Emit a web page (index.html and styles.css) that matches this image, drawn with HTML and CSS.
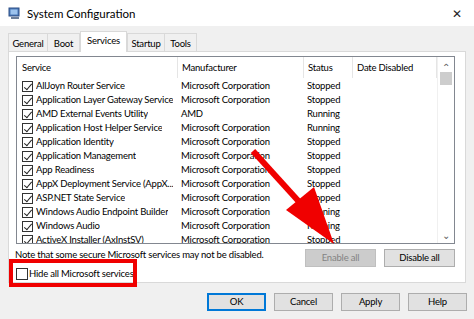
FILE: index.html
```html
<!DOCTYPE html>
<html>
<head>
    <meta charset="UTF-8">
    <title>System Configuration</title>
    <link rel="stylesheet" href="styles.css">
</head>
<body>
    <!-- Title bar -->
    <div class="titlebar">
        <svg class="app-icon" width="13" height="13" viewBox="0 0 13 13">
            <rect x="1" y="1" width="10" height="8" fill="#4a78b8" stroke="#2d4f86"/>
            <rect x="2.5" y="2.5" width="7" height="5" fill="#9cc3ee"/>
            <rect x="3" y="10" width="8" height="2" fill="#6d7f99"/>
        </svg>
        <span class="title">System Configuration</span>
        <span class="close">✕</span>
    </div>

    <!-- Tabs -->
    <div class="tabs">
        <div class="tab general">General</div>
        <div class="tab boot">Boot</div>
        <div class="tab active">Services</div>
        <div class="tab startup">Startup</div>
        <div class="tab tools">Tools</div>
    </div>

    <div class="panel">
        <div class="list">
            <div class="list-body">
                <div class="row header">
                    <div class="cell first">Service</div>
                    <div class="cell">Manufacturer</div>
                    <div class="cell">Status</div>
                    <div class="cell">Date Disabled</div>
                </div>
                <div id="rows"></div>
            </div>
            <div class="scrollbar">
                <div class="arrow up">&#8963;</div>
                <div class="thumb"></div>
                <div class="track"></div>
                <div class="arrow down">&#8964;</div>
            </div>
        </div>

        <div class="footer">
            <div class="notes">
                <div class="note">Note that some secure Microsoft services may not be disabled.</div>
                <label class="hide-ms"><span class="box"></span>Hide all Microsoft services</label>
            </div>
            <div class="btn disabled">Enable all</div>
            <div class="btn">Disable all</div>
        </div>
    </div>

    <div class="dialog-buttons">
        <div class="btn default">OK</div>
        <div class="btn">Cancel</div>
        <div class="btn">Apply</div>
        <div class="btn">Help</div>
    </div>

    <!-- annotations -->
    <div class="red-box"></div>
    <svg class="red-arrow" width="474" height="319" viewBox="0 0 474 319">
        <line x1="253" y1="151" x2="302" y2="205" stroke="#f00000" stroke-width="6"/>
        <polygon points="286,210 314,187 334,244" fill="#f00000"/>
    </svg>

    <script>
        const services = [
            ["AllJoyn Router Service", "Microsoft Corporation", "Stopped"],
            ["Application Layer Gateway Service", "Microsoft Corporation", "Stopped"],
            ["AMD External Events Utility", "AMD", "Running"],
            ["Application Host Helper Service", "Microsoft Corporation", "Running"],
            ["Application Identity", "Microsoft Corporation", "Stopped"],
            ["Application Management", "Microsoft Corporation", "Stopped"],
            ["App Readiness", "Microsoft Corporation", "Stopped"],
            ["AppX Deployment Service (AppX...", "Microsoft Corporation", "Stopped"],
            ["ASP.NET State Service", "Microsoft Corporation", "Stopped"],
            ["Windows Audio Endpoint Builder", "Microsoft Corporation", "Running"],
            ["Windows Audio", "Microsoft Corporation", "Running"],
            ["ActiveX Installer (AxInstSV)", "Microsoft Corporation", "Stopped"]
        ];

        let html = '';
        services.forEach(s => {
            html += `<div class="row">
                <div class="cell first"><span class="box checked"></span><span class="txt">${s[0]}</span></div>
                <div class="cell">${s[1]}</div>
                <div class="cell">${s[2]}</div>
                <div class="cell"></div>
            </div>`;
        });
        document.getElementById('rows').innerHTML = html;
    </script>
</body>
</html>
```

FILE: styles.css
```css
body {
    margin: 0;
    width: 474px;
    height: 319px;
    overflow: hidden;
    background-color: #f0f0f0;
    font-family: Lato, "Liberation Sans", sans-serif;
    font-size: 9.5px;
    letter-spacing: -0.2px;
    color: #000;
    position: relative;
}
.titlebar {
    height: 26px;
    background-color: #fff;
    display: flex;
    align-items: center;
    padding-left: 8px;
    padding-right: 12px;
}
.app-icon {
    margin-right: 6px;
}
.title {
    font-size: 11.5px;
    letter-spacing: 0;
    flex: 1;
}
.close {
    font-size: 12px;
    color: #222;
}
.tabs {
    display: flex;
    padding-left: 8px;
    margin-top: 6px;
    height: 19px;
    align-items: flex-end;
}
.tab {
    height: 18px;
    line-height: 19px;
    text-align: center;
    border: 1px solid #d9d9d9;
    border-bottom: none;
    background-color: #f0f0f0;
    margin-right: -1px;
    box-sizing: border-box;
}
.general { width: 40px; }
.boot { width: 33px; }
.startup { width: 38px; }
.tools { width: 33px; }
.tab.active {
    width: 47px;
    height: 21px;
    line-height: 17px;
    background-color: #fff;
    margin: 0 0 -1px 1px;
    position: relative;
    z-index: 1;
}
.panel {
    margin: 0 8px;
    height: 226px;
    background-color: #fff;
    border: 1px solid #d9d9d9;
    padding: 4px 10px 0 7px;
}
.list {
    height: 186px;
    border: 1px solid #828790;
    display: flex;
    overflow: hidden;
}
.list-body {
    flex: 1;
    overflow: hidden;
}
.row {
    display: grid;
    grid-template-columns: 161px 126px 49px 84px;
    height: 14px;
    line-height: 14px;
    white-space: nowrap;
}
.row.header {
    height: 21px;
    line-height: 21px;
    margin-bottom: 1px;
}
.row.header .cell {
    border-right: 1px solid #e5e5e5;
    padding-left: 4px;
}
.cell {
    padding-left: 3px;
    overflow: hidden;
}
.cell.first {
    display: flex;
    align-items: center;
    padding-left: 5px;
}
.txt {
    overflow: hidden;
}
.row.header .cell.first {
    padding-left: 5px;
}
.box {
    display: inline-block;
    width: 11px;
    height: 11px;
    border: 1px solid #333;
    background-color: #fff;
    margin-right: 3px;
    position: relative;
    box-sizing: border-box;
    flex: none;
}
.box.checked::after {
    content: "";
    position: absolute;
    left: 3px;
    top: 0px;
    width: 3px;
    height: 7px;
    border: solid #222;
    border-width: 0 1px 1px 0;
    transform: rotate(40deg);
}
.scrollbar {
    width: 16px;
    border-left: 1px solid #f0f0f0;
    background-color: #fff;
    display: flex;
    flex-direction: column;
    align-items: center;
}
.arrow {
    height: 15px;
    line-height: 15px;
    font-size: 10px;
    color: #606060;
}
.arrow.up {
    line-height: 20px;
}
.thumb {
    width: 12px;
    height: 13px;
    background-color: #cdcdcd;
}
.track {
    flex: 1;
}
.footer {
    display: flex;
    align-items: flex-start;
    margin-top: 5px;
    gap: 8px;
}
.notes {
    flex: 1;
    white-space: nowrap;
}
.note {
    line-height: 12px;
    margin-left: -1px;
}
.hide-ms {
    display: flex;
    align-items: center;
    margin-top: 7px;
    line-height: 12px;
}
.hide-ms .box {
    width: 12px;
    height: 12px;
    border-color: #333;
    margin-right: 1px;
}
.btn {
    width: 69px;
    height: 16px;
    line-height: 16px;
    text-align: center;
    background-color: #e1e1e1;
    border: 1px solid #adadad;
}
.btn.disabled {
    background-color: #cccccc;
    border-color: #bfbfbf;
    color: #838383;
}
.dialog-buttons {
    display: flex;
    justify-content: flex-end;
    gap: 8px;
    padding-right: 7px;
    margin-top: 10px;
}
.dialog-buttons .btn {
    width: 57px;
}
.btn.default {
    border: 2px solid #0078d7;
    height: 14px;
    line-height: 14px;
    width: 55px;
}
.red-box {
    position: absolute;
    left: 9px;
    top: 259px;
    width: 120px;
    height: 20px;
    border: 4px solid #f00000;
}
.red-arrow {
    position: absolute;
    left: 0;
    top: 0;
}
```
